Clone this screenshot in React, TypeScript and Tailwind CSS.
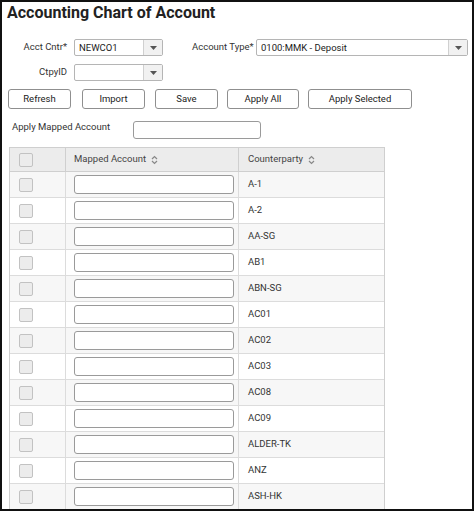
import React from "react";

const rows = ["A-1","A-2","AA-SG","AB1","ABN-SG","AC01","AC02","AC03","AC08","AC09","ALDER-TK","ANZ","ASH-HK"];

function Select({ value, w }: { value: string; w: string }) {
  return (
    <div className={`${w} h-[17px] flex border border-[#b5b5b5] rounded-[2px] bg-white shrink-0`}>
      <div className="flex-1 px-[4px] text-[9.5px] leading-[15px] text-[#222] truncate">{value}</div>
      <div className="w-[19px] h-full flex items-center justify-center bg-[#f1f1f1] border-l border-[#d0d0d0]">
        <svg width="7" height="4" viewBox="0 0 7 4"><path d="M0 0 L7 0 L3.5 4 Z" fill="#555" /></svg>
      </div>
    </div>
  );
}

function Btn({ label, w }: { label: string; w: string }) {
  return (
    <div className={`${w} h-[20px] flex items-center justify-center border border-[#8f8f8f] rounded-[3px] bg-white text-[9.5px] text-[#222] whitespace-nowrap`}>
      {label}
    </div>
  );
}

function SortIcon() {
  return (
    <svg width="7" height="10" viewBox="0 0 7 10" className="ml-[5px]">
      <path d="M1 4 L3.5 1.5 L6 4" stroke="#888" strokeWidth="1.2" fill="none" />
      <path d="M1 6 L3.5 8.5 L6 6" stroke="#888" strokeWidth="1.2" fill="none" />
    </svg>
  );
}

function Check() {
  return <div className="w-[14px] h-[14px] border border-[#c2c2c2] rounded-[2px] bg-[#ececec]" />;
}

export default function App() {
  return (
    <div className="w-[475px] h-[514px] bg-white" style={{ fontFamily: "Roboto, 'Liberation Sans', sans-serif" }}>
      <div className="w-[474px] h-[511px] border-2 border-[#111] overflow-hidden relative">
        <div className="pl-[5px] pt-[1px] text-[16px] leading-[19px] font-bold text-[#222]">Accounting Chart of Account</div>

        <div className="flex items-center mt-[17px]">
          <div className="w-[65px] text-right text-[9.5px] text-[#333] whitespace-nowrap shrink-0">Acct Cntr*</div>
          <div className="ml-[7px]"><Select value="NEWCO1" w="w-[89px]" /></div>
          <div className="ml-[29px] text-[9.5px] text-[#333] whitespace-nowrap w-[60px] shrink-0">Account Type*</div>
          <div className="ml-[4px]"><Select value="0100:MMK - Deposit" w="w-[212px]" /></div>
        </div>

        <div className="flex items-center mt-[8px]">
          <div className="w-[65px] text-right text-[9.5px] text-[#333] whitespace-nowrap shrink-0">CtpyID</div>
          <div className="ml-[7px]"><Select value="" w="w-[89px]" /></div>
        </div>

        <div className="flex items-center mt-[8px] pl-[6px]">
          <Btn label="Refresh" w="w-[63px]" />
          <div className="ml-[11px]"><Btn label="Import" w="w-[63px]" /></div>
          <div className="ml-[10px]"><Btn label="Save" w="w-[63px]" /></div>
          <div className="ml-[9px]"><Btn label="Apply All" w="w-[72px]" /></div>
          <div className="ml-[9px]"><Btn label="Apply Selected" w="w-[104px]" /></div>
        </div>

        <div className="flex items-start mt-[11px]">
          <div className="pl-[10px] text-[9.5px] leading-[14px] text-[#333] w-[131px] whitespace-nowrap shrink-0">Apply Mapped Account</div>
          <div className="w-[128px] h-[18px] border border-[#9a9a9a] rounded-[3px] bg-white mt-[1px]" />
        </div>

        <div className="ml-[7px] mt-[8px] w-[376px] border border-[#cfcfcf] border-b-0">
          <div className="flex h-[24px] bg-[#ececec] border-b border-[#cfcfcf]">
            <div className="w-[56px] flex items-center pl-[9px] border-r border-[#cfcfcf]"><Check /></div>
            <div className="w-[173px] flex items-center pl-[8px] text-[9.5px] text-[#444] border-r border-[#cfcfcf]">Mapped Account<SortIcon /></div>
            <div className="flex-1 flex items-center pl-[9px] text-[9.5px] text-[#444]">Counterparty<SortIcon /></div>
          </div>
          {rows.map((r, i) => (
            <div key={r} className={`flex h-[26px] border-b border-[#dcdcdc] ${i % 2 === 0 ? "bg-[#f7f7f7]" : "bg-white"}`}>
              <div className="w-[56px] flex items-center pl-[9px] border-r border-[#dcdcdc]"><Check /></div>
              <div className="w-[173px] flex items-center pl-[8px] border-r border-[#dcdcdc]">
                <div className="w-[160px] h-[19px] border border-[#9a9a9a] rounded-[3px] bg-white" />
              </div>
              <div className="flex-1 flex items-center pl-[9px] text-[9.5px] text-[#333]">{r}</div>
            </div>
          ))}
        </div>
      </div>
    </div>
  );
}
